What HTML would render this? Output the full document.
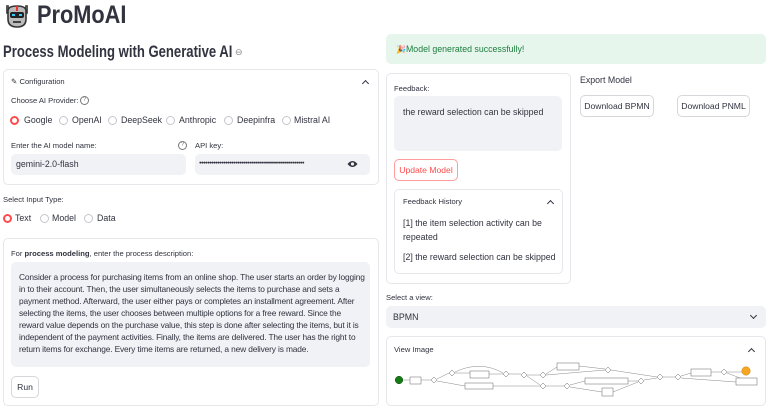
<!DOCTYPE html>
<html><head><meta charset="utf-8"><style>
*{box-sizing:border-box;margin:0;padding:0}
body{width:768px;height:408px;overflow:hidden;background:#fff;font-family:"Liberation Sans",sans-serif;color:#31333f;position:relative}
.a{position:absolute;white-space:nowrap}
.box{position:absolute;border:1px solid #e6e7eb;border-radius:5px}
.in{position:absolute;background:#f0f2f6;border-radius:5px}
.s{font-size:7.6px}
.t{font-size:8.8px}
.r{position:absolute;width:9px;height:9px;border-radius:50%;border:1px solid #c4c6cc;background:#fff}
.r.on{border:2.5px solid #ff4b4b}
.btn{position:absolute;border:1px solid #d6d7db;border-radius:5px;background:#fff;font-size:8.6px;display:flex;align-items:center;justify-content:center}
.chev{position:absolute;width:5px;height:5px;border-left:1.3px solid #31333f;border-top:1.3px solid #31333f;transform:rotate(45deg)}
.q{position:absolute;width:9px;height:9px;border:1px solid #777;border-radius:50%;font-size:6px;text-align:center;line-height:7px;color:#777}
</style></head><body>
<svg class="a" style="left:4px;top:3px" width="26" height="26" viewBox="0 0 26 26">
<rect x="2" y="2" width="3" height="9" rx="1" fill="#555"/><rect x="21" y="2" width="3" height="9" rx="1" fill="#555"/>
<path d="M4 8 Q4 3 13 3 Q22 3 22 8 L22 16 Q22 24 13 24 Q4 24 4 16Z" fill="#bbb" stroke="#333" stroke-width="1.6"/>
<rect x="12" y="3" width="2" height="5" fill="#e33"/>
<rect x="6" y="9" width="14" height="6" rx="2" fill="#222"/>
<rect x="8" y="11" width="3" height="2" fill="#3cf"/><rect x="15" y="11" width="3" height="2" fill="#3cf"/>
<rect x="9" y="18" width="8" height="2" fill="#444"/>
</svg>
<div class="a" style="left:37px;top:1px;font-size:25px;font-weight:bold;transform:scaleX(0.87);transform-origin:0 0">ProMoAI</div>
<div class="a" style="left:3px;top:42px;font-size:17px;font-weight:bold;transform:scaleX(0.77);transform-origin:0 0">Process Modeling with Generative AI</div>
<div class="a" style="left:235px;top:47px;font-size:9px;color:#888">⊖</div>

<div class="box" style="left:3px;top:69px;width:376px;height:116px"></div>
<div class="a s" style="left:11px;top:77px">✎ Configuration</div>
<div class="chev" style="left:363px;top:81px"></div>
<div class="a s" style="left:11px;top:96px">Choose AI Provider:</div>
<div class="q" style="left:80px;top:96px">?</div>
<div class="r on" style="left:10px;top:116px"></div><div class="a t" style="left:24px;top:115px">Google</div>
<div class="r" style="left:59px;top:116px"></div><div class="a t" style="left:72px;top:115px">OpenAI</div>
<div class="r" style="left:108px;top:116px"></div><div class="a t" style="left:121px;top:115px">DeepSeek</div>
<div class="r" style="left:166px;top:116px"></div><div class="a t" style="left:179px;top:115px">Anthropic</div>
<div class="r" style="left:224px;top:116px"></div><div class="a t" style="left:237px;top:115px">Deepinfra</div>
<div class="r" style="left:282px;top:116px"></div><div class="a t" style="left:294px;top:115px">Mistral AI</div>
<div class="a s" style="left:11px;top:141px">Enter the AI model name:</div>
<div class="q" style="left:178px;top:141px">?</div>
<div class="a s" style="left:195px;top:141px">API key:</div>
<div class="in" style="left:11px;top:154px;width:175px;height:21px"></div>
<div class="a t" style="left:16px;top:159px">gemini-2.0-flash</div>
<div class="in" style="left:195px;top:154px;width:175px;height:21px"></div>
<div class="a" style="left:199px;top:160px;font-size:4.5px;letter-spacing:-0.7px">●●●●●●●●●●●●●●●●●●●●●●●●●●●●●●●●●●●●●●●●●●●●●●●●●●●●</div>
<svg class="a" style="left:347px;top:160px" width="11" height="8" viewBox="0 0 11 8"><path d="M0.5 4 Q5.5 -2 10.5 4 Q5.5 10 0.5 4Z" fill="#31333f"/><circle cx="5.5" cy="4" r="1.6" fill="#f0f2f6"/></svg>

<div class="a s" style="left:3px;top:195px">Select Input Type:</div>
<div class="r on" style="left:3px;top:214px"></div><div class="a t" style="left:15px;top:213px">Text</div>
<div class="r" style="left:40px;top:214px"></div><div class="a t" style="left:52px;top:213px">Model</div>
<div class="r" style="left:84px;top:214px"></div><div class="a t" style="left:97px;top:213px">Data</div>

<div class="box" style="left:3px;top:238px;width:376px;height:168px"></div>
<div class="a s" style="left:11px;top:249px">For <b>process modeling</b>, enter the process description:</div>
<div class="in" style="left:11px;top:262px;width:359px;height:105px"></div>
<div class="a" style="left:19px;top:271px;font-size:8.4px;line-height:12px;letter-spacing:-0.15px">Consider a process for purchasing items from an online shop. The user starts an order by logging<br>in to their account. Then, the user simultaneously selects the items to purchase and sets a<br>payment method. Afterward, the user either pays or completes an installment agreement. After<br>selecting the items, the user chooses between multiple options for a free reward. Since the<br>reward value depends on the purchase value, this step is done after selecting the items, but it is<br>independent of the payment activities. Finally, the items are delivered. The user has the right to<br>return items for exchange. Every time items are returned, a new delivery is made.</div>
<div class="btn" style="left:11px;top:376px;width:28px;height:22px">Run</div>

<div class="a" style="left:386px;top:34px;width:380px;height:30px;background:#e6f6ec;border-radius:5px"></div>
<div class="a t" style="left:396px;top:44px;color:#1e7d3e"><span style="font-size:8px">🎉</span>Model generated successfully!</div>

<div class="box" style="left:386px;top:73px;width:185px;height:211px"></div>
<div class="a s" style="left:394px;top:84px">Feedback:</div>
<div class="in" style="left:394px;top:96px;width:168px;height:55px"></div>
<div class="a t" style="left:403px;top:107px">the reward selection can be skipped</div>
<div class="btn" style="left:394px;top:159px;width:64px;height:22px;border-color:#ff9c9c;color:#ff4b4b">Update Model</div>
<div class="box" style="left:394px;top:189px;width:169px;height:85px"></div>
<div class="a s" style="left:403px;top:197px">Feedback History</div>
<div class="chev" style="left:548px;top:201px"></div>
<div class="a t" style="left:403px;top:216px;line-height:14px">[1] the item selection activity can be<br>repeated</div>
<div class="a t" style="left:403px;top:252px">[2] the reward selection can be skipped</div>

<div class="a t" style="left:580px;top:75px">Export Model</div>
<div class="btn" style="left:580px;top:95px;width:74px;height:22px">Download BPMN</div>
<div class="btn" style="left:677px;top:95px;width:73px;height:22px">Download PNML</div>

<div class="a s" style="left:386px;top:293px">Select a view:</div>
<div class="in" style="left:386px;top:306px;width:380px;height:22px"></div>
<div class="a t" style="left:393px;top:312px">BPMN</div>
<div class="chev" style="left:751px;top:313px;transform:rotate(225deg)"></div>
<div class="box" style="left:386px;top:336px;width:380px;height:70px"></div>
<div class="a s" style="left:394px;top:345px">View Image</div>
<div class="chev" style="left:749px;top:349px"></div>

<svg class="a" style="left:0;top:0" width="768" height="408" viewBox="0 0 768 408" fill="#fff" stroke="#666" stroke-width="0.5">
<g fill="none" stroke="#888">
<path d="M403 380H410M421 380H431M437 379L449 373M437 381L465 386M455 373H470M455 372Q480 360 503 373M488 374H503M493 386H540M509 374H521M527 375H540M527 376L540 385M546 374L557 367M546 375L605 370M579 366L605 369M546 386H564M570 385L585 381M570 387L602 392M628 381H638M613 392L638 382M611 370L657 377M644 380L657 378M663 377H675M681 376L691 373M711 372H721M727 372H742M727 373L740 378M736 382L681 378"/>
</g>
<circle cx="399" cy="380" r="3.8" fill="#157a15" stroke="#0b4d0b"/>
<circle cx="746" cy="371" r="4.2" fill="#f5a623" stroke="#c98000"/>
<rect x="410" y="377" width="11" height="7"/>
<rect x="470" y="371" width="19" height="7"/>
<rect x="465" y="383" width="28" height="6"/>
<rect x="557" y="363" width="22" height="7"/>
<rect x="585" y="378" width="43" height="6"/>
<rect x="602" y="388" width="11" height="8"/>
<rect x="691" y="369" width="20" height="7"/>
<rect x="736" y="378" width="21" height="7"/>
<g>
<path d="M434 377l3 3-3 3-3-3z"/><path d="M452 370l3 3-3 3-3-3z"/><path d="M506 371l3 3-3 3-3-3z"/><path d="M524 372l3 3-3 3-3-3z"/><path d="M543 372l3 3-3 3-3-3z"/><path d="M608 367l3 3-3 3-3-3z"/><path d="M543 383l3 3-3 3-3-3z"/><path d="M567 383l3 3-3 3-3-3z"/><path d="M641 378l3 3-3 3-3-3z"/><path d="M660 374l3 3-3 3-3-3z"/><path d="M678 374l3 3-3 3-3-3z"/><path d="M724 369l3 3-3 3-3-3z"/>
</g>
</svg>
</body></html>
